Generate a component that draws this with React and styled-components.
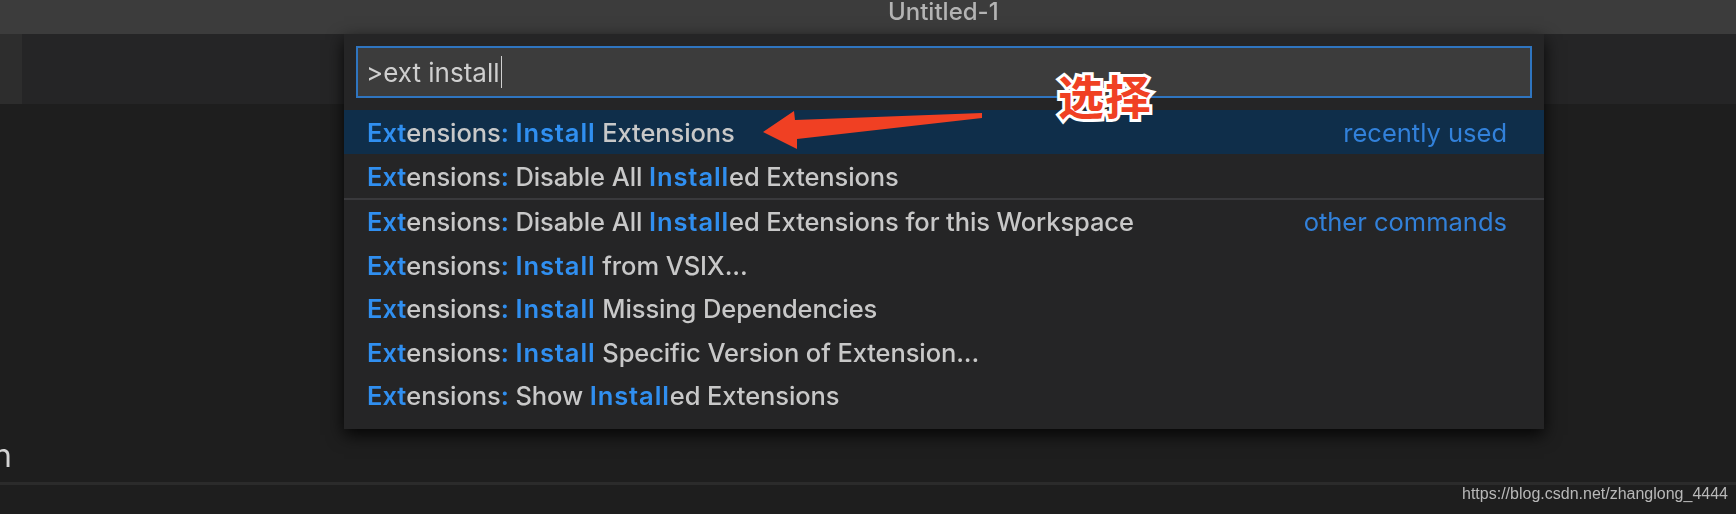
import styled, { createGlobalStyle } from "styled-components";

const GlobalStyle = createGlobalStyle`
	html, body {
		margin: 0;
		padding: 0;
		background: #1e1e1e;
	}
	body {
		font-family: "Inter", "Liberation Sans", sans-serif;
	}
`;

const COMMANDS = [
	{ id: 1, active: true, tall: true, note: "recently used", parts: [["Ext", 1], ["ensions", 0], [":", 1], [" ", 0], ["Install", 2], [" Extensions", 0]] },
	{ id: 2, divided: true, tall: true, parts: [["Ext", 1], ["ensions", 0], [":", 1], [" Disable All ", 0], ["Install", 2], ["ed Extensions", 0]] },
	{ id: 3, note: "other commands", parts: [["Ext", 1], ["ensions", 0], [":", 1], [" Disable All ", 0], ["Install", 2], ["ed Extensions for this Workspace", 0]] },
	{ id: 4, parts: [["Ext", 1], ["ensions", 0], [":", 1], [" ", 0], ["Install", 2], [" from VSIX...", 0]] },
	{ id: 5, parts: [["Ext", 1], ["ensions", 0], [":", 1], [" ", 0], ["Install", 2], [" Missing Dependencies", 0]] },
	{ id: 6, parts: [["Ext", 1], ["ensions", 0], [":", 1], [" ", 0], ["Install", 2], [" Specific Version of Extension...", 0]] },
	{ id: 7, parts: [["Ext", 1], ["ensions", 0], [":", 1], [" Show ", 0], ["Install", 2], ["ed Extensions", 0]] },
];

const Window = styled.div`
	position: relative;
	width: 1736px;
	height: 514px;
	overflow: hidden;
	display: flex;
	flex-direction: column;
	background: #1e1e1e;
`;

const TitleBar = styled.div`
	height: 34px;
	box-sizing: border-box;
	padding: 0 0 0 888px;
	background: #3c3c3c;
	color: #b4b4b4;
	font-size: 24px;
	font-weight: 500;
	line-height: 24px;
	filter: blur(0.5px);
`;

const TabStrip = styled.div`
	height: 70px;
	background: #252526;
	display: flex;
`;

const TabStub = styled.div`
	width: 22px;
	background: #2d2d2d;
`;

const Editor = styled.div`
	flex: 1;
	display: flex;
	flex-direction: column;
	justify-content: flex-end;
`;

const EditorText = styled.div`
	color: #d4d4d4;
	font-size: 32px;
	line-height: 36px;
	margin-left: -7px;
	margin-bottom: 8px;
	filter: blur(0.4px);
`;

const Footer = styled.div`
	height: 29px;
	border-top: 3px solid #2b2b2b;
	display: flex;
	justify-content: flex-end;
	padding-right: 8px;
`;

const Watermark = styled.div`
	color: #b8b8b8;
	font-family: "Liberation Sans", sans-serif;
	font-size: 16px;
	line-height: 18px;
	filter: blur(0.4px);
`;

const Palette = styled.div`
	position: absolute;
	top: 34px;
	left: 344px;
	width: 1200px;
	height: 395px;
	background: #252526;
	box-shadow: 0 6px 16px rgba(0, 0, 0, 0.85);
	padding-top: 12px;
	box-sizing: border-box;
`;

const InputBox = styled.div`
	height: 52px;
	margin: 0 12px 12px;
	box-sizing: border-box;
	border: 2px solid #2f75c0;
	background: #3c3c3c;
	display: flex;
	align-items: center;
	padding-left: 8px;
	color: #cfcfcf;
	font-size: 26px;
`;

const InputText = styled.span`
	filter: blur(0.5px);
`;

const Caret = styled.span`
	width: 1px;
	height: 32px;
	margin-left: 1px;
	background: #d0d0d0;
`;

const Row = styled.div`
	height: ${({ $tall }) => ($tall ? "44px" : "43.5px")};
	display: flex;
	align-items: center;
	justify-content: space-between;
	padding: 0 37px 0 23px;
	font-size: 25.5px;
	font-weight: 500;
	letter-spacing: -0.1px;
	white-space: pre;
	color: #c8c8c8;
	background: ${({ $active }) => ($active ? "#0f2e4a" : "transparent")};
	border-bottom: ${({ $divided }) => ($divided ? "2px solid #39393c" : "none")};
`;

const Label = styled.span`
	filter: blur(0.5px);
`;

const Match = styled.span`
	color: #308ff0;
	font-weight: 600;
	letter-spacing: ${({ $wide }) => ($wide ? "0.9px" : "0")};
`;

const Note = styled.span`
	color: #3281da;
	font-weight: 400;
	letter-spacing: 0;
	filter: blur(0.4px);
`;

const Arrow = styled.svg`
	position: absolute;
	top: 0;
	left: 0;
	pointer-events: none;
`;

const Callout = styled.div`
	position: absolute;
	top: 64px;
	left: 1058px;
	font-family: "Noto Sans CJK SC", sans-serif;
	font-size: 46px;
	line-height: 60px;
	font-weight: 700;
	color: #f04023;
	-webkit-text-stroke: 6px #fff;
	paint-order: stroke fill;
	letter-spacing: 1px;
`;

export default function App() {
	return (
		<>
			<GlobalStyle />
			<Window>
				<TitleBar>Untitled-1</TitleBar>
				<TabStrip>
					<TabStub />
				</TabStrip>
				<Editor>
					<EditorText>n</EditorText>
					<Footer>
						<Watermark>https://blog.csdn.net/zhanglong_4444</Watermark>
					</Footer>
				</Editor>
				<Palette>
					<InputBox>
						<InputText>&gt;ext install</InputText>
						<Caret />
					</InputBox>
					{COMMANDS.map(({ id, active, tall, divided, note, parts }) => (
						<Row key={id} $active={active} $tall={tall} $divided={divided}>
							<Label>
								{parts.map(([text, hit], i) =>
									hit ? (
										<Match key={i} $wide={hit === 2}>
											{text}
										</Match>
									) : (
										<span key={i}>{text}</span>
									)
								)}
							</Label>
							{note && <Note>{note}</Note>}
						</Row>
					))}
				</Palette>
				<Arrow width="1736" height="514" viewBox="0 0 1736 514">
					<path
						d="M763 132 L794 111 L795 120 L982 113 L982 118 L797 139 L797 149 Z"
						fill="#f04023"
					/>
				</Arrow>
				<Callout>选择</Callout>
			</Window>
		</>
	);
}
